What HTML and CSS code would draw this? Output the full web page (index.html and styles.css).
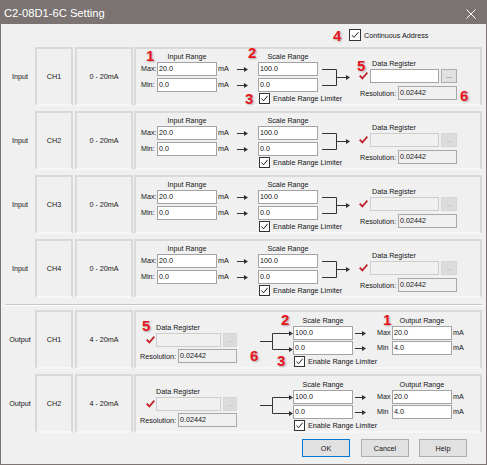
FILE: index.html
```html
<!DOCTYPE html>
<html>
<head>
<meta charset="utf-8">
<title>C2-08D1-6C Setting</title>
<link rel="stylesheet" href="styles.css">
</head>
<body>
<div class="titlebar">
  <span class="title">C2-08D1-6C Setting</span>
  <svg class="close" width="10" height="10" viewBox="0 0 10 10"><path d="M0.5 0.5 L9.5 9.5 M9.5 0.5 L0.5 9.5" stroke="#fff" stroke-width="1" fill="none"/></svg>
</div>
<div class="frame">
  <div class="toprow">
    <span class="num inl">4</span>
    <span class="cb big"><svg width="10" height="10" viewBox="0 0 10 10"><path d="M1.8 5 L4 7.4 L8.4 2.2" stroke="#222" stroke-width="1" fill="none"/></svg></span>
    <span class="toplabel">Continuous Address</span>
  </div>

  <div class="rows">
    <!-- INPUT CH1 -->
    <div class="row">
      <div class="rlabel">Input</div>
      <div class="cell ch">CH1</div>
      <div class="cell rng">0 - 20mA</div>
      <div class="cell main inmain">
        <div class="ingrid">
          <span class="gt c2 r1">Input Range</span>
          <span class="gt c6 r1">Scale Range</span>
          <span class="tx c1 r2">Max:</span>
          <span class="tb c2 r2">20.0</span>
          <span class="tx unit c3 r2">mA</span>
          <svg class="arr c4 r2" width="11" height="14" viewBox="0 0 11 14"><path d="M0 7.5 H7" stroke="#333" stroke-width="1"/><path d="M7 5 L11 7.5 L7 10 Z" fill="#333"/></svg>
          <span class="tb c6 r2">100.0</span>
          <span class="tx c1 r3">Min:</span>
          <span class="tb c2 r3">0.0</span>
          <span class="tx unit c3 r3">mA</span>
          <svg class="arr c4 r3" width="11" height="14" viewBox="0 0 11 14"><path d="M0 7.5 H7" stroke="#333" stroke-width="1"/><path d="M7 5 L11 7.5 L7 10 Z" fill="#333"/></svg>
          <span class="tb c6 r3">0.0</span>
          <svg class="brk c7 r23" width="40" height="30" viewBox="0 0 40 30"><path d="M4 7.5 H18.5 V23.5 H4 M18.5 15.5 H28" stroke="#333" stroke-width="1" fill="none"/><path d="M28 13 L32 15.5 L28 18 Z" fill="#333"/></svg>
          <span class="chk c6 r4 wide"><span class="cb"><svg width="9" height="9" viewBox="0 0 9 9"><path d="M1.5 4.5 L3.6 6.8 L7.6 1.8" stroke="#222" stroke-width="1" fill="none"/></svg></span>Enable Range Limiter</span>
        </div>
        <div class="dr drin">
          <div class="dr-label">Data Register</div>
          <div class="dr-row"><span class="rc"><svg width="9" height="8" viewBox="0 0 9 8"><path d="M0 4.2 L1.5 3 L3.4 5 L7.7 0 L9 1.2 L3.4 7.8 Z" fill="#c3242c"/></svg></span><span class="tb drbox"></span><span class="dots">...</span></div>
          <div class="res-row"><span class="res-l">Resolution:</span><span class="tb ro resbox">0.02442</span></div>
        </div>
        <span class="num i1">1</span>
        <span class="num i2">2</span>
        <span class="num i3">3</span>
        <span class="num i5">5</span>
        <span class="num i6">6</span>
      </div>
    </div>

    <!-- INPUT CH2 -->
    <div class="row">
      <div class="rlabel">Input</div>
      <div class="cell ch">CH2</div>
      <div class="cell rng">0 - 20mA</div>
      <div class="cell main inmain">
        <div class="ingrid">
          <span class="gt c2 r1">Input Range</span>
          <span class="gt c6 r1">Scale Range</span>
          <span class="tx c1 r2">Max:</span>
          <span class="tb c2 r2">20.0</span>
          <span class="tx unit c3 r2">mA</span>
          <svg class="arr c4 r2" width="11" height="14" viewBox="0 0 11 14"><path d="M0 7.5 H7" stroke="#333" stroke-width="1"/><path d="M7 5 L11 7.5 L7 10 Z" fill="#333"/></svg>
          <span class="tb c6 r2">100.0</span>
          <span class="tx c1 r3">Min:</span>
          <span class="tb c2 r3">0.0</span>
          <span class="tx unit c3 r3">mA</span>
          <svg class="arr c4 r3" width="11" height="14" viewBox="0 0 11 14"><path d="M0 7.5 H7" stroke="#333" stroke-width="1"/><path d="M7 5 L11 7.5 L7 10 Z" fill="#333"/></svg>
          <span class="tb c6 r3">0.0</span>
          <svg class="brk c7 r23" width="40" height="30" viewBox="0 0 40 30"><path d="M4 7.5 H18.5 V23.5 H4 M18.5 15.5 H28" stroke="#333" stroke-width="1" fill="none"/><path d="M28 13 L32 15.5 L28 18 Z" fill="#333"/></svg>
          <span class="chk c6 r4 wide"><span class="cb"><svg width="9" height="9" viewBox="0 0 9 9"><path d="M1.5 4.5 L3.6 6.8 L7.6 1.8" stroke="#222" stroke-width="1" fill="none"/></svg></span>Enable Range Limiter</span>
        </div>
        <div class="dr drin">
          <div class="dr-label">Data Register</div>
          <div class="dr-row"><span class="rc"><svg width="9" height="8" viewBox="0 0 9 8"><path d="M0 4.2 L1.5 3 L3.4 5 L7.7 0 L9 1.2 L3.4 7.8 Z" fill="#c3242c"/></svg></span><span class="tb drbox dis"></span><span class="dots dis">...</span></div>
          <div class="res-row"><span class="res-l">Resolution:</span><span class="tb ro resbox">0.02442</span></div>
        </div>
      </div>
    </div>

    <!-- INPUT CH3 -->
    <div class="row">
      <div class="rlabel">Input</div>
      <div class="cell ch">CH3</div>
      <div class="cell rng">0 - 20mA</div>
      <div class="cell main inmain">
        <div class="ingrid">
          <span class="gt c2 r1">Input Range</span>
          <span class="gt c6 r1">Scale Range</span>
          <span class="tx c1 r2">Max:</span>
          <span class="tb c2 r2">20.0</span>
          <span class="tx unit c3 r2">mA</span>
          <svg class="arr c4 r2" width="11" height="14" viewBox="0 0 11 14"><path d="M0 7.5 H7" stroke="#333" stroke-width="1"/><path d="M7 5 L11 7.5 L7 10 Z" fill="#333"/></svg>
          <span class="tb c6 r2">100.0</span>
          <span class="tx c1 r3">Min:</span>
          <span class="tb c2 r3">0.0</span>
          <span class="tx unit c3 r3">mA</span>
          <svg class="arr c4 r3" width="11" height="14" viewBox="0 0 11 14"><path d="M0 7.5 H7" stroke="#333" stroke-width="1"/><path d="M7 5 L11 7.5 L7 10 Z" fill="#333"/></svg>
          <span class="tb c6 r3">0.0</span>
          <svg class="brk c7 r23" width="40" height="30" viewBox="0 0 40 30"><path d="M4 7.5 H18.5 V23.5 H4 M18.5 15.5 H28" stroke="#333" stroke-width="1" fill="none"/><path d="M28 13 L32 15.5 L28 18 Z" fill="#333"/></svg>
          <span class="chk c6 r4 wide"><span class="cb"><svg width="9" height="9" viewBox="0 0 9 9"><path d="M1.5 4.5 L3.6 6.8 L7.6 1.8" stroke="#222" stroke-width="1" fill="none"/></svg></span>Enable Range Limiter</span>
        </div>
        <div class="dr drin">
          <div class="dr-label">Data Register</div>
          <div class="dr-row"><span class="rc"><svg width="9" height="8" viewBox="0 0 9 8"><path d="M0 4.2 L1.5 3 L3.4 5 L7.7 0 L9 1.2 L3.4 7.8 Z" fill="#c3242c"/></svg></span><span class="tb drbox dis"></span><span class="dots dis">...</span></div>
          <div class="res-row"><span class="res-l">Resolution:</span><span class="tb ro resbox">0.02442</span></div>
        </div>
      </div>
    </div>

    <!-- INPUT CH4 -->
    <div class="row">
      <div class="rlabel">Input</div>
      <div class="cell ch">CH4</div>
      <div class="cell rng">0 - 20mA</div>
      <div class="cell main inmain">
        <div class="ingrid">
          <span class="gt c2 r1">Input Range</span>
          <span class="gt c6 r1">Scale Range</span>
          <span class="tx c1 r2">Max:</span>
          <span class="tb c2 r2">20.0</span>
          <span class="tx unit c3 r2">mA</span>
          <svg class="arr c4 r2" width="11" height="14" viewBox="0 0 11 14"><path d="M0 7.5 H7" stroke="#333" stroke-width="1"/><path d="M7 5 L11 7.5 L7 10 Z" fill="#333"/></svg>
          <span class="tb c6 r2">100.0</span>
          <span class="tx c1 r3">Min:</span>
          <span class="tb c2 r3">0.0</span>
          <span class="tx unit c3 r3">mA</span>
          <svg class="arr c4 r3" width="11" height="14" viewBox="0 0 11 14"><path d="M0 7.5 H7" stroke="#333" stroke-width="1"/><path d="M7 5 L11 7.5 L7 10 Z" fill="#333"/></svg>
          <span class="tb c6 r3">0.0</span>
          <svg class="brk c7 r23" width="40" height="30" viewBox="0 0 40 30"><path d="M4 7.5 H18.5 V23.5 H4 M18.5 15.5 H28" stroke="#333" stroke-width="1" fill="none"/><path d="M28 13 L32 15.5 L28 18 Z" fill="#333"/></svg>
          <span class="chk c6 r4 wide"><span class="cb"><svg width="9" height="9" viewBox="0 0 9 9"><path d="M1.5 4.5 L3.6 6.8 L7.6 1.8" stroke="#222" stroke-width="1" fill="none"/></svg></span>Enable Range Limiter</span>
        </div>
        <div class="dr drin">
          <div class="dr-label">Data Register</div>
          <div class="dr-row"><span class="rc"><svg width="9" height="8" viewBox="0 0 9 8"><path d="M0 4.2 L1.5 3 L3.4 5 L7.7 0 L9 1.2 L3.4 7.8 Z" fill="#c3242c"/></svg></span><span class="tb drbox dis"></span><span class="dots dis">...</span></div>
          <div class="res-row"><span class="res-l">Resolution:</span><span class="tb ro resbox">0.02442</span></div>
        </div>
      </div>
    </div>

    <div class="sep"></div>

    <!-- OUTPUT CH1 -->
    <div class="row">
      <div class="rlabel">Output</div>
      <div class="cell ch">CH1</div>
      <div class="cell rng">4 - 20mA</div>
      <div class="cell main outmain">
        <div class="dr drout">
          <div class="dr-label">Data Register</div>
          <div class="dr-row"><span class="rc"><svg width="9" height="8" viewBox="0 0 9 8"><path d="M0 4.2 L1.5 3 L3.4 5 L7.7 0 L9 1.2 L3.4 7.8 Z" fill="#c3242c"/></svg></span><span class="tb drbox dis"></span><span class="dots dis">...</span></div>
          <div class="res-row"><span class="res-l">Resolution:</span><span class="tb ro resbox">0.02442</span></div>
        </div>
        <div class="outgrid">
          <span class="gt c2 r1">Scale Range</span>
          <span class="gt c5 r1">Output Range</span>
          <svg class="brk c1 r23" width="33" height="30" viewBox="0 0 33 30"><path d="M0 15.5 H12.5 M12.5 7.5 V23.5 M12.5 7.5 H29 M12.5 23.5 H29" stroke="#333" stroke-width="1" fill="none"/><path d="M29 5 L33 7.5 L29 10 Z M29 21 L33 23.5 L29 26 Z" fill="#333"/></svg>
          <span class="tb c2 r2">100.0</span>
          <svg class="arr oarr c3 r2" width="11" height="14" viewBox="0 0 11 14"><path d="M0 7.5 H7" stroke="#333" stroke-width="1"/><path d="M7 5 L11 7.5 L7 10 Z" fill="#333"/></svg>
          <span class="tx c4 r2">Max</span>
          <span class="tb c5 r2">20.0</span>
          <span class="tx unit c6 r2">mA</span>
          <span class="tb c2 r3">0.0</span>
          <svg class="arr oarr c3 r3" width="11" height="14" viewBox="0 0 11 14"><path d="M0 7.5 H7" stroke="#333" stroke-width="1"/><path d="M7 5 L11 7.5 L7 10 Z" fill="#333"/></svg>
          <span class="tx c4 r3">Min</span>
          <span class="tb c5 r3">4.0</span>
          <span class="tx unit c6 r3">mA</span>
          <span class="chk c2 r4 wide"><span class="cb"><svg width="9" height="9" viewBox="0 0 9 9"><path d="M1.5 4.5 L3.6 6.8 L7.6 1.8" stroke="#222" stroke-width="1" fill="none"/></svg></span>Enable Range Limiter</span>
        </div>
        <span class="num o5">5</span>
        <span class="num o6">6</span>
        <span class="num o2">2</span>
        <span class="num o1">1</span>
        <span class="num o3">3</span>
      </div>
    </div>

    <!-- OUTPUT CH2 -->
    <div class="row">
      <div class="rlabel">Output</div>
      <div class="cell ch">CH2</div>
      <div class="cell rng">4 - 20mA</div>
      <div class="cell main outmain">
        <div class="dr drout">
          <div class="dr-label">Data Register</div>
          <div class="dr-row"><span class="rc"><svg width="9" height="8" viewBox="0 0 9 8"><path d="M0 4.2 L1.5 3 L3.4 5 L7.7 0 L9 1.2 L3.4 7.8 Z" fill="#c3242c"/></svg></span><span class="tb drbox dis"></span><span class="dots dis">...</span></div>
          <div class="res-row"><span class="res-l">Resolution:</span><span class="tb ro resbox">0.02442</span></div>
        </div>
        <div class="outgrid">
          <span class="gt c2 r1">Scale Range</span>
          <span class="gt c5 r1">Output Range</span>
          <svg class="brk c1 r23" width="33" height="30" viewBox="0 0 33 30"><path d="M0 15.5 H12.5 M12.5 7.5 V23.5 M12.5 7.5 H29 M12.5 23.5 H29" stroke="#333" stroke-width="1" fill="none"/><path d="M29 5 L33 7.5 L29 10 Z M29 21 L33 23.5 L29 26 Z" fill="#333"/></svg>
          <span class="tb c2 r2">100.0</span>
          <svg class="arr oarr c3 r2" width="11" height="14" viewBox="0 0 11 14"><path d="M0 7.5 H7" stroke="#333" stroke-width="1"/><path d="M7 5 L11 7.5 L7 10 Z" fill="#333"/></svg>
          <span class="tx c4 r2">Max</span>
          <span class="tb c5 r2">20.0</span>
          <span class="tx unit c6 r2">mA</span>
          <span class="tb c2 r3">0.0</span>
          <svg class="arr oarr c3 r3" width="11" height="14" viewBox="0 0 11 14"><path d="M0 7.5 H7" stroke="#333" stroke-width="1"/><path d="M7 5 L11 7.5 L7 10 Z" fill="#333"/></svg>
          <span class="tx c4 r3">Min</span>
          <span class="tb c5 r3">4.0</span>
          <span class="tx unit c6 r3">mA</span>
          <span class="chk c2 r4 wide"><span class="cb"><svg width="9" height="9" viewBox="0 0 9 9"><path d="M1.5 4.5 L3.6 6.8 L7.6 1.8" stroke="#222" stroke-width="1" fill="none"/></svg></span>Enable Range Limiter</span>
        </div>
      </div>
    </div>
  </div>

  <div class="buttons">
    <span class="btn def">OK</span>
    <span class="btn">Cancel</span>
    <span class="btn">Help</span>
  </div>
</div>
</body>
</html>
```

FILE: styles.css
```css
* { box-sizing: border-box; }
html, body { margin: 0; padding: 0; }
body {
  width: 487px;
  height: 465px;
  overflow: hidden;
  background: #f0f0f0;
  font-family: "Liberation Sans", Arial, sans-serif;
  font-size: 7.2px;
  color: #151515;
}

.titlebar {
  height: 24px;
  background: #7a7371;
  display: flex;
  align-items: center;
  justify-content: space-between;
  padding: 0 11px 0 4px;
}
.title {
  color: #fff;
  font-size: 11.2px;
  line-height: 24px;
  padding-top: 1px;
}
.close { display: block; margin-top: 3px; }

.frame {
  height: 441px;
  border: 1px solid #7a7371;
  border-top: 0;
  display: flex;
  flex-direction: column;
}

.toprow {
  height: 12px;
  margin-top: 5px;
  display: flex;
  align-items: center;
  padding-left: 332px;
}
.toplabel { margin-left: 3px; }

.num {
  position: absolute;
  font-family: "Liberation Sans", Arial, sans-serif;
  font-weight: bold;
  font-size: 15px;
  line-height: 15px;
  color: #e8141e;
  text-shadow: 1px 1px 2px rgba(0, 0, 0, 0.3);
}
.num.inl { position: static; width: 9px; margin-right: 7px; line-height: 12px; padding-top: 1px; }

.cb {
  width: 11px;
  height: 11px;
  border: 1px solid #333;
  background: #fff;
  display: flex;
  align-items: center;
  justify-content: center;
  flex: none;
}
.cb svg { display: block; }
.cb.big { width: 12px; height: 12px; }

.rows { margin-top: 6px; display: flex; flex-direction: column; }
.row {
  display: flex;
  height: 59px;
  margin-bottom: 5px;
}
.rlabel {
  width: 34px;
  padding-left: 4px;
  display: flex;
  align-items: center;
  justify-content: center;
}
.cell {
  border: 2px solid #d9d9d9;
  border-bottom-color: #f7f7f7;
  display: flex;
  align-items: center;
  justify-content: center;
}
.ch { width: 38px; }
.rng { width: 58px; margin-left: 2px; }
.main {
  width: 348px;
  margin-left: 1px;
  position: relative;
  align-items: flex-start;
  justify-content: flex-start;
  padding-top: 3px;
}
.inmain { padding-left: 5px; }
.outmain { padding-left: 4px; }

.sep {
  height: 2px;
  margin: 1px 4px 4px 4px;
  border-top: 1px solid #c8c8c8;
  border-bottom: 1px solid #ffffff;
}

/* grids */
.ingrid {
  display: grid;
  grid-template-columns: 16px 60px 20px 11px 10px 60px 40px;
  grid-template-rows: 10px 16px 14px 12px;
}
.outgrid {
  margin-left: 23px;
  display: grid;
  grid-template-columns: 33px 60px 24px 15px 60px 18px;
  grid-template-rows: 11px 15px 14px 13px;
}
.c1 { grid-column-start: 1; }
.c2 { grid-column-start: 2; }
.c3 { grid-column-start: 3; }
.c4 { grid-column-start: 4; }
.c5 { grid-column-start: 5; }
.c6 { grid-column-start: 6; }
.c7 { grid-column-start: 7; }
.r1 { grid-row-start: 1; }
.r2 { grid-row-start: 2; }
.r3 { grid-row-start: 3; }
.r4 { grid-row-start: 4; }
.r23 { grid-row: 2 / 4; }
.wide { grid-column-end: span 3; }

.gt { text-align: center; line-height: 10px; white-space: nowrap; }
.outgrid .gt { line-height: 11px; }
.tx { line-height: 14px; height: 14px; white-space: nowrap; }
.unit { padding-left: 1px; }
.arr { display: block; }
.oarr { margin-left: 2px; }
.brk { display: block; }

.tb {
  display: block;
  height: 14px;
  border: 1px solid #a3a3a3;
  background: #fff;
  line-height: 12px;
  padding-left: 1px;
  white-space: nowrap;
}
.tb.dis { background: #f0f0f0; border-color: #cdcdcd; }
.tb.ro { background: #f0f0f0; border-color: #a8a8a8; }

.chk {
  display: flex;
  align-items: center;
  height: 12px;
  margin-left: 1px;
  white-space: nowrap;
}
.chk .cb { margin-right: 3px; }

/* data register */
.dr { display: flex; flex-direction: column; }
.drin { margin-top: 6px; }
.drout { margin-top: 7px; width: 97px; }
.dr-label { height: 11px; line-height: 11px; }
.drin .dr-label { padding-left: 14px; }
.drout .dr-label { padding-left: 16px; }
.dr-row { display: flex; height: 14px; align-items: center; }
.rc { display: flex; align-items: center; }
.rc svg { display: block; }
.drin .rc { width: 12px; padding-left: 1px; }
.drout .rc { width: 16px; padding-left: 6px; }
.drin .drbox { width: 69px; }
.drout .drbox { width: 65px; }
.dots {
  height: 14px;
  margin-left: 2px;
  border: 1px solid #adadad;
  background: #e1e1e1;
  display: flex;
  align-items: center;
  justify-content: center;
  color: #333;
  line-height: 10px;
}
.drin .dots { width: 16px; }
.drout .dots { width: 14px; }
.dots.dis { background: #dcdcdc; border-color: #d6d6d6; color: #a8a8a8; }
.res-row { display: flex; align-items: center; height: 14px; }
.drin .res-row { margin-top: 3px; }
.drout .res-row { margin-top: 2px; }
.res-l { white-space: nowrap; }
.drin .res-l { width: 40px; padding-left: 2px; }
.drout .res-l { width: 38px; }
.resbox { width: 59px; }

/* red annotation positions */
.i1 { left: 10px; top: -1px; }
.i2 { left: 112px; top: -4px; }
.i3 { left: 109px; top: 42px; }
.i5 { left: 221px; top: 9px; }
.i6 { left: 324px; top: 39px; }
.o5 { left: 6px; top: 6px; }
.o6 { left: 114px; top: 36px; }
.o2 { left: 145px; top: 0px; }
.o1 { left: 247px; top: 0px; }
.o3 { left: 141px; top: 41px; }

.buttons {
  display: flex;
  justify-content: flex-end;
  padding-right: 19px;
  margin-top: 1px;
}
.btn {
  width: 48px;
  height: 18px;
  margin-left: 10px;
  border: 1px solid #adadad;
  background: #e1e1e1;
  display: flex;
  align-items: center;
  justify-content: center;
}
.btn.def { border-color: #0078d7; margin-right: 1px; }
```
